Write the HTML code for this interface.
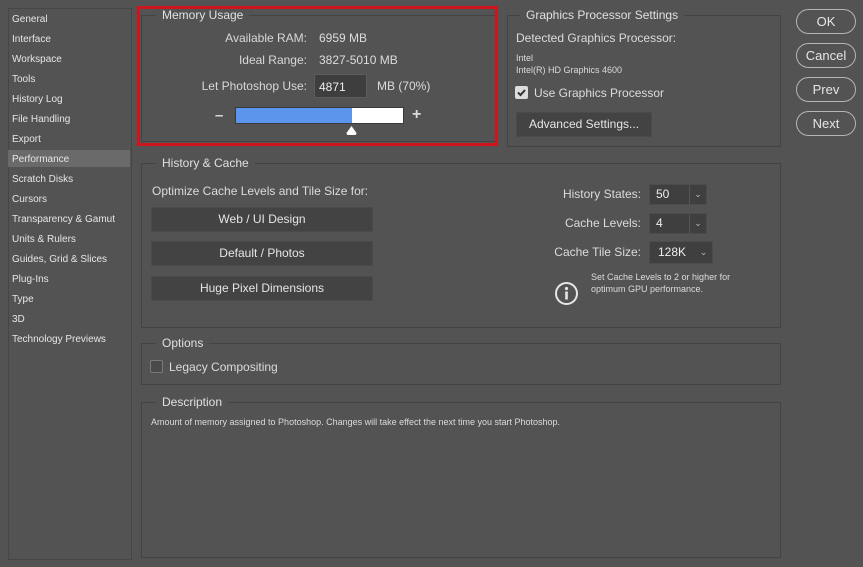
<!DOCTYPE html>
<html><head><meta charset="utf-8"><style>
*{margin:0;padding:0;box-sizing:border-box}
body{width:863px;height:567px;background:#535353;font-family:"Liberation Sans","DejaVu Sans",sans-serif;color:#dcdcdc;position:relative;overflow:hidden;font-size:12px}
.a{position:absolute;white-space:nowrap}
.side{position:absolute;left:8px;top:8px;width:124px;height:552px;border:1px solid #464646;background:#535353}
.si{position:absolute;font-size:10px;color:#e6e6e6;height:17px;line-height:19px;padding-left:4px;width:122px;left:-1px}
.grp{position:absolute;border:1px solid #434343}
.gt{position:absolute;top:-9px;left:14px;background:#535353;padding:0 6px;font-size:12px;color:#e0e0e0;line-height:17px}
.btn{position:absolute;background:#434343;border:1px solid #4a4a4a;color:#e6e6e6;text-align:center;font-size:12px}
.pill{position:absolute;left:796px;width:60px;height:25px;border:1px solid #b5b5b5;border-radius:13px;text-align:center;line-height:23px;font-size:13px;color:#e6e6e6}
.dd{position:absolute;background:#3f3f3f;border:1px solid #4c4c4c;font-size:12px;color:#eee;line-height:19px;padding-left:6px}
.dd i{position:absolute;right:0;top:0;width:17px;height:100%;border-left:1px solid #555;font-style:normal;font-size:9px;text-align:center;color:#bbb}
.r{text-align:right}
</style></head><body>
<div class="side">
<div class="si" style="top:1px">General</div>
<div class="si" style="top:21px">Interface</div>
<div class="si" style="top:41px">Workspace</div>
<div class="si" style="top:61px">Tools</div>
<div class="si" style="top:81px">History Log</div>
<div class="si" style="top:101px">File Handling</div>
<div class="si" style="top:121px">Export</div>
<div class="si" style="top:141px;background:#6a6a6a">Performance</div>
<div class="si" style="top:161px">Scratch Disks</div>
<div class="si" style="top:181px">Cursors</div>
<div class="si" style="top:201px">Transparency &amp; Gamut</div>
<div class="si" style="top:221px">Units &amp; Rulers</div>
<div class="si" style="top:241px">Guides, Grid &amp; Slices</div>
<div class="si" style="top:261px">Plug-Ins</div>
<div class="si" style="top:281px">Type</div>
<div class="si" style="top:301px">3D</div>
<div class="si" style="top:321px">Technology Previews</div>
</div>

<div class="grp" style="left:141px;top:15px;width:355px;height:127px"><div class="gt">Memory Usage</div></div>
<div class="a" style="left:137px;top:6px;width:361px;height:140px;border:3px solid #d0141c"></div>
<div class="a r" style="left:160px;width:147px;top:31px;color:#d8d8d8">Available RAM:</div>
<div class="a" style="left:319px;top:31px">6959 MB</div>
<div class="a r" style="left:160px;width:147px;top:53px;color:#d8d8d8">Ideal Range:</div>
<div class="a" style="left:319px;top:53px">3827-5010 MB</div>
<div class="a r" style="left:160px;width:147px;top:79px;color:#d8d8d8">Let Photoshop Use:</div>
<div class="a" style="left:314px;top:74px;width:53px;height:24px;background:#3e3e3e;border:1px solid #5c5c5c;padding:5px 4px;color:#eee">4871</div>
<div class="a" style="left:377px;top:79px">MB (70%)</div>
<div class="a" style="left:215px;top:107px;font-size:15px;font-weight:bold">–</div>
<div class="a" style="left:235px;top:107px;width:169px;height:17px;background:#fff;border:1px solid #3a3a3a"><div style="width:116px;height:100%;background:#5b96ec"></div></div>
<svg class="a" style="left:345px;top:125px" width="13" height="11"><path d="M6.5 1 L11.5 8 Q11.5 10 9.5 10 H3.5 Q1.5 10 1.5 8 Z" fill="#fff"/></svg>
<div class="a" style="left:412px;top:106px;font-size:16px;font-weight:bold">+</div>

<div class="grp" style="left:507px;top:15px;width:274px;height:132px"><div class="gt" style="left:12px">Graphics Processor Settings</div></div>
<div class="a" style="left:516px;top:31px">Detected Graphics Processor:</div>
<div class="a" style="left:516px;top:53px;font-size:9px">Intel</div>
<div class="a" style="left:516px;top:65px;font-size:9px">Intel(R) HD Graphics 4600</div>
<div class="a" style="left:515px;top:86px;width:13px;height:13px;background:#ddd;border-radius:2px"><svg width="13" height="13" style="display:block"><path d="M3 6.5 L5.5 9 L10 4" stroke="#333" stroke-width="2" fill="none"/></svg></div>
<div class="a" style="left:534px;top:86px">Use Graphics Processor</div>
<div class="btn" style="left:516px;top:112px;width:136px;height:25px;line-height:23px">Advanced Settings...</div>

<div class="pill" style="top:9px">OK</div>
<div class="pill" style="top:43px">Cancel</div>
<div class="pill" style="top:77px">Prev</div>
<div class="pill" style="top:111px">Next</div>

<div class="grp" style="left:141px;top:163px;width:640px;height:165px"><div class="gt">History &amp; Cache</div></div>
<div class="a" style="left:152px;top:184px">Optimize Cache Levels and Tile Size for:</div>
<div class="btn" style="left:151px;top:207px;width:222px;height:25px;line-height:23px">Web / UI Design</div>
<div class="btn" style="left:151px;top:241px;width:222px;height:25px;line-height:23px">Default / Photos</div>
<div class="btn" style="left:151px;top:276px;width:222px;height:25px;line-height:23px">Huge Pixel Dimensions</div>
<div class="a r" style="left:500px;width:141px;top:187px">History States:</div>
<div class="a r" style="left:500px;width:141px;top:216px">Cache Levels:</div>
<div class="a r" style="left:500px;width:141px;top:245px">Cache Tile Size:</div>
<div class="dd" style="left:649px;top:184px;width:58px;height:21px">50<i>⌄</i></div>
<div class="dd" style="left:649px;top:213px;width:58px;height:21px">4<i>⌄</i></div>
<div class="dd" style="left:649px;top:241px;width:64px;height:23px;line-height:21px;padding-left:8px">128K<i style="border:none">⌄</i></div>
<svg class="a" style="left:554px;top:281px" width="25" height="25"><circle cx="12.5" cy="12.5" r="10.5" stroke="#e6e6e6" stroke-width="2" fill="none"/><circle cx="12.5" cy="7.5" r="1.6" fill="#e6e6e6"/><rect x="11.2" y="10.5" width="2.6" height="8" fill="#e6e6e6"/></svg>
<div class="a" style="left:591px;top:271px;font-size:9px;line-height:12px">Set Cache Levels to 2 or higher for<br>optimum GPU performance.</div>

<div class="grp" style="left:141px;top:343px;width:640px;height:42px"><div class="gt">Options</div></div>
<div class="a" style="left:150px;top:360px;width:13px;height:13px;border:1px solid #7a7a7a;border-radius:2px;background:#4a4a4a"></div>
<div class="a" style="left:169px;top:360px">Legacy Compositing</div>

<div class="grp" style="left:141px;top:402px;width:640px;height:156px"><div class="gt">Description</div></div>
<div class="a" style="left:151px;top:417px;font-size:9px">Amount of memory assigned to Photoshop. Changes will take effect the next time you start Photoshop.</div>
</body></html>
